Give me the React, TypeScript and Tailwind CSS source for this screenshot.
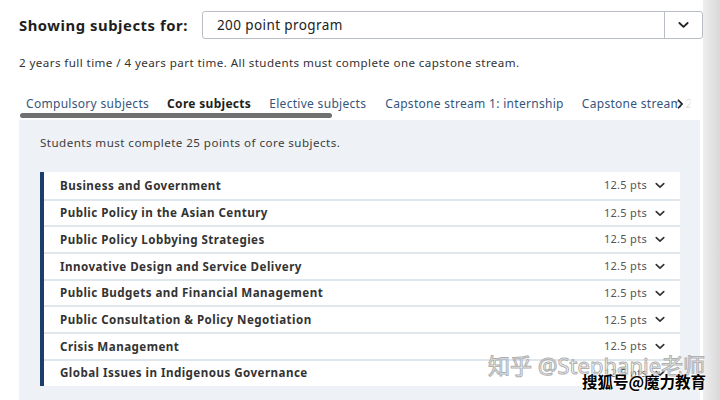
import React from "react";

const subjects = [
  "Business and Government",
  "Public Policy in the Asian Century",
  "Public Policy Lobbying Strategies",
  "Innovative Design and Service Delivery",
  "Public Budgets and Financial Management",
  "Public Consultation & Policy Negotiation",
  "Crisis Management",
  "Global Issues in Indigenous Governance",
];

const Chevron = ({ className = "" }: { className?: string }) => (
  <svg viewBox="0 0 12 8" className={className} fill="none" stroke="currentColor" strokeWidth="2" strokeLinecap="round" strokeLinejoin="round">
    <path d="M1.5 1.8 6 6 10.5 1.8" />
  </svg>
);

export default function App() {
  return (
    <div
      className="relative w-[720px] h-[400px] overflow-hidden bg-white flex"
      style={{ fontFamily: '"Noto Sans", "Open Sans", sans-serif' }}
    >
      <div className="w-[703px] pl-[19px] flex flex-col">
        {/* header */}
        <div className="flex items-center mt-[11px] h-[28px]">
          <div className="w-[183px] text-[14.8px] font-bold tracking-[0.55px] text-[#1e1e1e] leading-none">Showing subjects for:</div>
          <div className="flex-1 h-[28px] border border-[#b9bec4] rounded-[3px] flex items-stretch">
            <div className="flex-1 flex items-center pl-[14px] text-[13.5px] tracking-[0.4px] text-[#222]">200 point program</div>
            <div className="w-[38px] border-l border-[#b9bec4] flex items-center justify-center text-[#222]">
              <Chevron className="w-[11px] h-[8px]" />
            </div>
          </div>
        </div>
        <div className="mt-[16px] text-[11.6px] tracking-[0.42px] text-[#333] leading-[16px] whitespace-nowrap">
          2 years full time / 4 years part time. All students must complete one capstone stream.
        </div>
        {/* tabs */}
        <div className="relative mt-[22px] h-[27px] pr-[12px]">
          <div className="flex items-center h-[22px] text-[12px] tracking-[0.3px] text-[#35557d] whitespace-nowrap overflow-hidden">
            <div className="ml-[7px]">Compulsory subjects</div>
            <div className="ml-[18px] font-bold text-[#1e1e1e]">Core subjects</div>
            <div className="ml-[18px]">Elective subjects</div>
            <div className="ml-[19px]">Capstone stream 1: internship</div>
            <div className="ml-[18px]">Capstone stream 2: urban</div>
          </div>
          <div className="absolute left-[143px] top-[22px] w-[97px] h-[3px] bg-[#4c6383]" />
          <div className="absolute left-[1px] top-[20px] w-[312px] h-[5px] rounded-full bg-[#707070]" />
          <div className="absolute right-[12px] top-0 h-[22px] w-[14px] flex items-center justify-start bg-gradient-to-r from-[rgba(255,255,255,0.5)] to-[rgba(255,255,255,0.9)]">
            <svg viewBox="0 0 8 12" className="w-[7px] h-[10px]" fill="none" stroke="#1e1e1e" strokeWidth="2" strokeLinecap="round" strokeLinejoin="round">
              <path d="M1.5 1.5 6 6 1.5 10.5" />
            </svg>
          </div>
        </div>
        {/* panel */}
        <div className="mr-[3px] flex-1 bg-[#eef1f5] pl-[21px] pr-[20px] pt-[15px]">
          <div className="text-[11.6px] tracking-[0.45px] text-[#3d3d3d] leading-[16px]">Students must complete 25 points of core subjects.</div>
          <div className="mt-[21px] border-l-[4px] border-[#1d3d6b] bg-white">
            {subjects.map((s, i) => (
              <div
                key={s}
                className={`h-[26.7px] flex items-center pl-[16px] pr-[15px] ${i > 0 ? "border-t-2 border-[#dfe6ec]" : ""}`}
              >
                <div className="flex-1 text-[11.6px] tracking-[0.45px] font-bold text-[#333]">{s}</div>
                <div className="text-[11px] tracking-[0.3px] text-[#555]">12.5 pts</div>
                <Chevron className="ml-[8px] w-[10px] h-[7px] text-[#333]" />
              </div>
            ))}
          </div>
        </div>
      </div>
      {/* scrollbar */}
      <div className="w-[17px] h-full bg-gradient-to-r from-[#eeeeee] to-[#d9d9d9]" />

      {/* watermark */}
      <div className="absolute left-[488px] top-[354px] text-[22px] leading-none text-[rgba(255,255,255,0.6)] [-webkit-text-stroke:1px_#b0b0b0] whitespace-nowrap" style={{ fontFamily: '"Noto Sans", "Noto Sans CJK SC", sans-serif' }}>
        知乎 @Stephanie老师
      </div>
      <div className="absolute left-[582px] top-[374px] text-[15.5px] leading-none font-bold text-black [text-shadow:0_0_2px_#fff,0_0_2px_#fff,0_0_2px_#fff] whitespace-nowrap" style={{ fontFamily: '"Noto Sans CJK SC", sans-serif' }}>
        搜狐号@魔力教育
      </div>
    </div>
  );
}
